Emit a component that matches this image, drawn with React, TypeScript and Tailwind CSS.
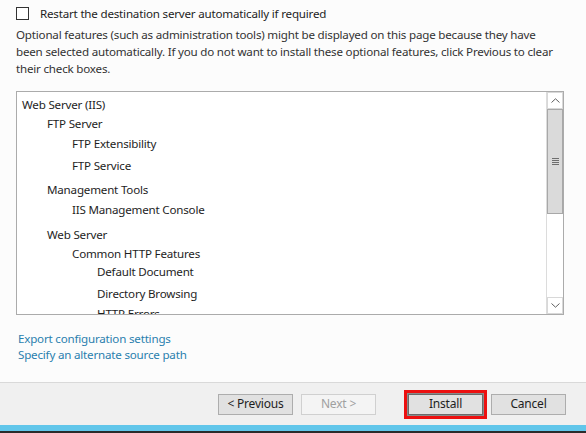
import React from 'react';

const font = "font-['Segoe_UI','Noto_Sans','Open_Sans',sans-serif] tracking-[-0.2px]";

// tree rows: label, indent level, top gap above the row
const rows: { label: string; level: number; gap: string }[] = [
  { label: 'Web Server (IIS)', level: 0, gap: 'mt-[5px]' },
  { label: 'FTP Server', level: 1, gap: 'mt-[3px]' },
  { label: 'FTP Extensibility', level: 2, gap: 'mt-[4px]' },
  { label: 'FTP Service', level: 2, gap: 'mt-[6px]' },
  { label: 'Management Tools', level: 1, gap: 'mt-[8px]' },
  { label: 'IIS Management Console', level: 2, gap: 'mt-[4px]' },
  { label: 'Web Server', level: 1, gap: 'mt-[9px]' },
  { label: 'Common HTTP Features', level: 2, gap: 'mt-[3px]' },
  { label: 'Default Document', level: 3, gap: 'mt-[2px]' },
  { label: 'Directory Browsing', level: 3, gap: 'mt-[6px]' },
  { label: 'HTTP Errors', level: 3, gap: 'mt-[4px]' },
];

const indent = ['pl-[5px]', 'pl-[30px]', 'pl-[55px]', 'pl-[80px]'];

const ScrollBar: React.FC = () => (
  <div className="w-[17px] shrink-0 border-l border-[#dcdcdc] bg-white flex flex-col">
    <div className="h-[17px] flex items-center justify-center border border-[#d8d8d8] bg-white">
      <svg width="9" height="5" viewBox="0 0 9 5">
        <path d="M0.5 4.5 L4.5 0.8 L8.5 4.5" fill="none" stroke="#606060" strokeWidth="1" />
      </svg>
    </div>
    <div className="h-[105px] bg-[#dadada] border border-[#a8a8a8] flex items-center justify-center">
      <div className="flex flex-col gap-px">
        <div className="w-[7px] h-px bg-[#6e6e6e]" />
        <div className="w-[7px] h-px bg-[#6e6e6e]" />
        <div className="w-[7px] h-px bg-[#6e6e6e]" />
        <div className="w-[7px] h-px bg-[#6e6e6e]" />
      </div>
    </div>
    <div className="flex-1" />
    <div className="h-[17px] flex items-center justify-center border border-[#d8d8d8] bg-white">
      <svg width="9" height="5" viewBox="0 0 9 5">
        <path d="M0.5 0.5 L4.5 4.2 L8.5 0.5" fill="none" stroke="#606060" strokeWidth="1" />
      </svg>
    </div>
  </div>
);

const Button: React.FC<{ label: string; disabled?: boolean; strong?: boolean }> = ({ label, disabled, strong }) => (
  <div
    className={`w-[75px] h-[21px] flex items-center justify-center text-[12px] border ${
      disabled
        ? 'bg-[#f4f4f4] border-[#d0d0d0] text-[#a0a0a0]'
        : strong
          ? 'bg-[#e1e1e1] border-[#6a6a6a] text-[#1e1e1e]'
          : 'bg-[#e1e1e1] border-[#adadad] text-[#1e1e1e]'
    }`}
  >
    {label}
  </div>
);

export default function App() {
  return (
    <div className={`w-[586px] h-[433px] flex flex-col bg-[#fcfcfc] text-[#1e1e1e] ${font}`}>
      <div className="h-[382px] px-4 flex flex-col">
        <div className="mt-[6px] h-[15px] flex items-center gap-[11px]">
          <div className="w-[13px] h-[13px] border border-[#333] bg-white" />
          <span className="text-[11.6px] whitespace-nowrap">Restart the destination server automatically if required</span>
        </div>

        <p className="mt-[5px] text-[11.6px] leading-[17px] text-[#333] whitespace-nowrap">
          Optional features (such as administration tools) might be displayed on this page because they have
          <br />
          been selected automatically. If you do not want to install these optional features, click Previous to clear
          <br />
          their check boxes.
        </p>

        <div className="mt-[14px] w-[548px] h-[224px] border border-[#ababab] bg-white flex">
          <div className="flex-1 overflow-hidden text-[11.6px] leading-[16px] text-[#1e1e1e]">
            {rows.map((r) => (
              <div key={r.label} className={`${r.gap} ${indent[r.level]} whitespace-nowrap`}>
                {r.label}
              </div>
            ))}
          </div>
          <ScrollBar />
        </div>

        <div className="mt-[16px] pl-[2px] flex flex-col text-[11.6px] leading-[16px] text-[#2a7fae]">
          <span>Export configuration settings</span>
          <span>Specify an alternate source path</span>
        </div>
      </div>

      <div className="h-[43px] border-t border-[#d9d9d9] bg-[#f0f0f0] flex items-center justify-end pr-[20px]">
        <Button label="< Previous" />
        <div className="ml-[8px]">
          <Button label="Next >" disabled />
        </div>
        <div className="ml-[28px] border-[3px] border-[#ec1010] p-px bg-[#8a8a8a]">
          <Button label="Install" strong />
        </div>
        <div className="ml-[4px]">
          <Button label="Cancel" />
        </div>
      </div>

      <div className="h-[6px] bg-[#62c6ea]" />
      <div className="h-[2px] bg-[#2b2b2b]" />
    </div>
  );
}
